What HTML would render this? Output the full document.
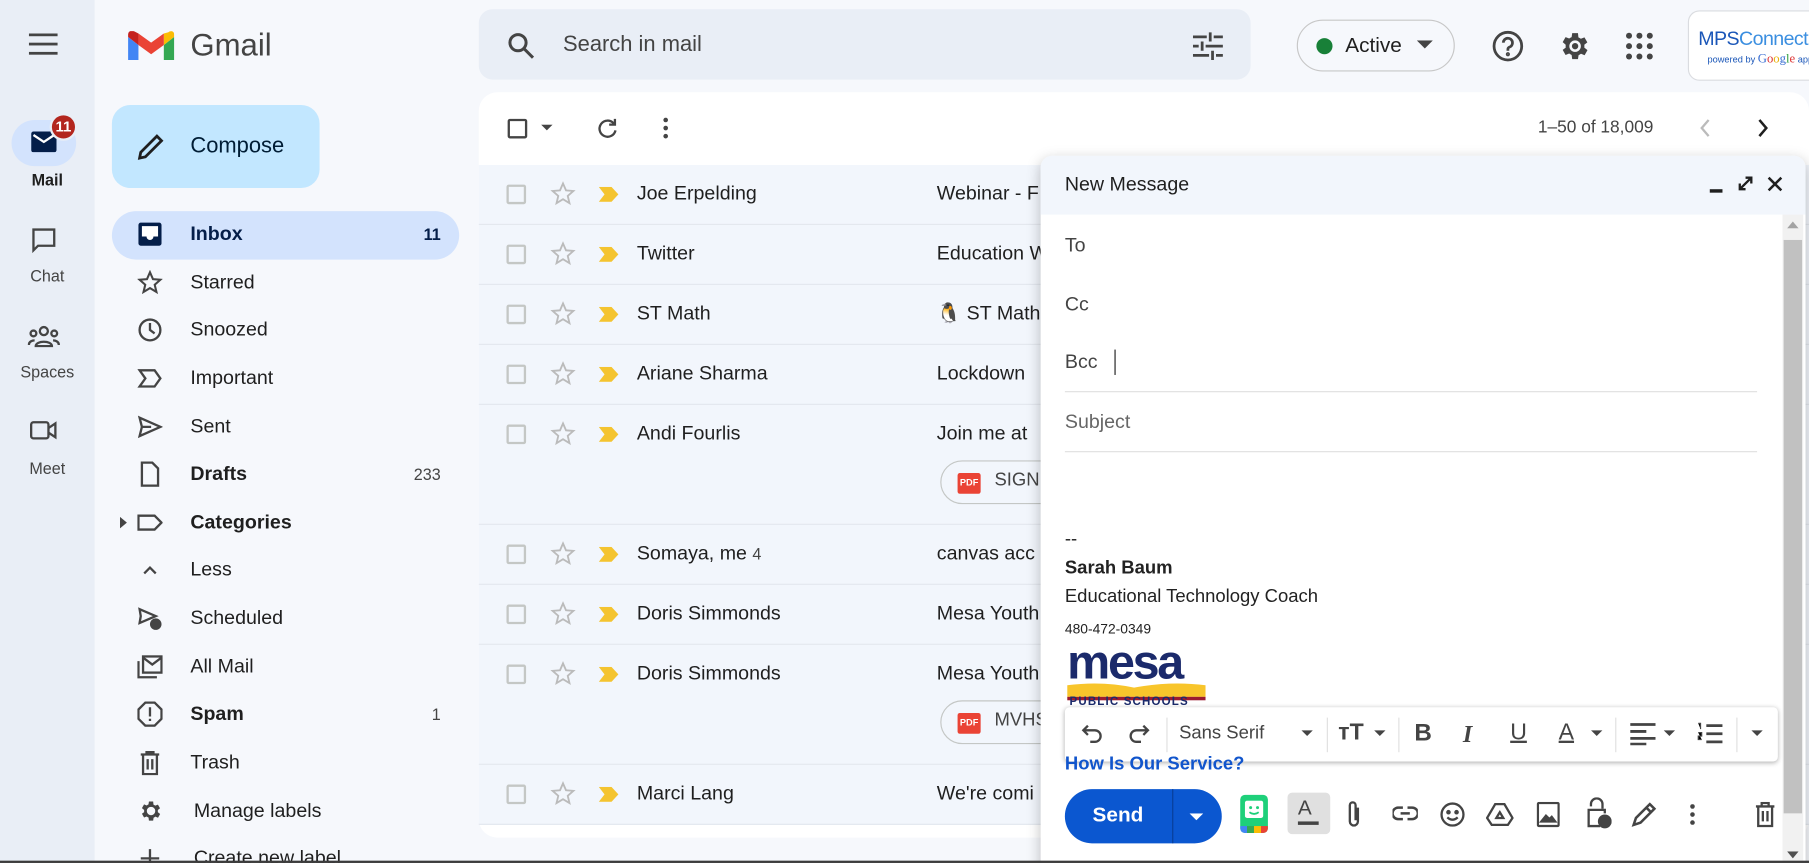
<!DOCTYPE html>
<html><head><meta charset="utf-8">
<style>
*{box-sizing:border-box;margin:0;padding:0}
html,body{width:1809px;height:863px;overflow:hidden;background:#f6f8fc}
#w{position:absolute;left:0;top:0;width:1568px;height:748px;transform:scale(1.15370);transform-origin:0 0;font-family:"Liberation Sans",Arial,sans-serif;color:#1f1f1f;background:#f6f8fc;overflow:hidden}
.a{position:absolute}
.rail{left:0;top:0;width:82px;height:748px;background:#e9eef6}
.rl{position:absolute;width:82px;text-align:center;font-size:14px;color:#444}
.nav{position:absolute;left:165px;font-size:17px;color:#1f1f1f;transform:translateY(-50%)}
.nb{font-weight:bold}
.ni{position:absolute;left:119px;width:22px;height:22px;transform:translateY(-50%)}
.cnt{position:absolute;right:1186px;font-size:14px;color:#444;transform:translateY(-50%)}
.row{position:absolute;left:415px;width:1153px;background:#f2f6fc;border-bottom:1px solid #e3e7ee}
.cb{position:absolute;left:24px;top:17px;width:17px;height:17px;border:2px solid #c4c7c5;border-radius:2px}
.st{position:absolute;left:62px;top:14px}
.imp{position:absolute;left:104px;top:19px}
.snd{position:absolute;left:137px;top:15px;font-size:17px;color:#1f1f1f}
.sub{position:absolute;left:397px;top:15px;font-size:17px;color:#1f1f1f}
.chip{position:absolute;left:400px;top:48px;width:140px;height:38px;border:1px solid #c4c7c5;border-radius:19px;background:#f2f6fc}
.pdf{position:absolute;left:14px;top:10px;width:20px;height:18px;background:#ea4335;border-radius:2px;color:#fff;font-size:8px;font-weight:bold;text-align:center;line-height:18px}
.chip span{position:absolute;left:46px;top:8px;font-size:16px;color:#444}
.fl{position:absolute;left:923px;font-size:17px;color:#444}
.ln{position:absolute;left:923px;width:600px;height:1px;background:#e0e0e0}
.ic{position:absolute}
</style></head><body><div id="w">
<div class="a rail"></div>
<!-- hamburger -->
<svg class="ic" style="left:25px;top:29px" width="25" height="20"><rect y="0" width="25" height="2.4" fill="#444"/><rect y="8" width="25" height="2.4" fill="#444"/><rect y="16" width="25" height="2.4" fill="#444"/></svg>
<!-- mail -->
<div class="a" style="left:10px;top:104px;width:56px;height:40px;border-radius:20px;background:#d3e3fd"></div>
<svg class="ic" style="left:27px;top:114px" width="22" height="18"><rect width="22" height="18" rx="2" fill="#041e49"/><path d="M2 3l9 6 9-6" stroke="#fff" stroke-width="2" fill="none"/></svg>
<div class="a" style="left:43px;top:98px;width:24px;height:24px;border-radius:12px;background:#b3261e;border:2px solid #e9eef6;color:#fff;font-size:13px;font-weight:bold;text-align:center;line-height:20px">11</div>
<div class="rl" style="top:148px;color:#1f1f1f;font-weight:bold;font-size:14px">Mail</div>
<svg class="ic" style="left:26px;top:196px" width="24" height="24" fill="none" stroke="#444" stroke-width="2"><path d="M3 3h18v14H7l-4 4z"/></svg>
<div class="rl" style="top:231px">Chat</div>
<svg class="ic" style="left:24px;top:281px" width="28" height="20" fill="none" stroke="#444" stroke-width="2"><circle cx="14" cy="6" r="3.5"/><circle cx="5" cy="8" r="2.5"/><circle cx="23" cy="8" r="2.5"/><path d="M7 19c0-5 14-5 14 0zM1 18c0-3 3-4 5-4M27 18c0-3-3-4-5-4"/></svg>
<div class="rl" style="top:314px">Spaces</div>
<svg class="ic" style="left:25px;top:363px" width="26" height="20" fill="none" stroke="#444" stroke-width="2"><rect x="2" y="3" width="15" height="14" rx="2"/><path d="M17 8l6-4v12l-6-4"/></svg>
<div class="rl" style="top:398px">Meet</div>

<!-- gmail logo -->
<svg class="ic" style="left:111px;top:27px" width="40" height="27" viewBox="0 0 40 27"><path d="M0 5v20h9V12z" fill="#4285f4"/><path d="M31 12v13h9V5z" fill="#34a853"/><path d="M31 2v10l9-7V3c0-3-3-4-5-2z" fill="#fbbc04"/><path d="M9 12V2l11 8 11-8v10l-11 8z" fill="#ea4335"/><path d="M0 3v2l9 7V2L5 0C3-1 0 0 0 3z" fill="#c5221f"/></svg>
<div class="a" style="left:165px;top:24px;font-size:27px;color:#444">Gmail</div>

<!-- search -->
<div class="a" style="left:415px;top:8px;width:669px;height:61px;border-radius:12px;background:#e9eef6"></div>
<svg class="ic" style="left:440px;top:28px" width="24" height="24" fill="none" stroke="#444" stroke-width="2.6"><circle cx="9" cy="9" r="7"/><path d="M14 14l8 8"/></svg>
<div class="a" style="left:488px;top:28px;font-size:19px;color:#444">Search in mail</div>
<svg class="ic" style="left:1034px;top:28px" width="26" height="24" stroke="#444" stroke-width="2.4"><path d="M0 4h12M18 4h8M0 12h5M11 12h15M0 20h14M20 20h6M15 0v8M8 8v8M17 16v8"/></svg>
<!-- active -->
<div class="a" style="left:1124px;top:17px;width:137px;height:45px;border:1px solid #c7c7c7;border-radius:23px"></div>
<div class="a" style="left:1141px;top:33px;width:14px;height:14px;border-radius:7px;background:#188038"></div>
<div class="a" style="left:1166px;top:29px;font-size:18px;color:#1f1f1f">Active</div>
<svg class="ic" style="left:1228px;top:35px" width="14" height="8"><path d="M0 0h14L7 7z" fill="#444"/></svg>
<svg class="ic" style="left:1293px;top:26px" width="28" height="28" fill="none" stroke="#444" stroke-width="2.4"><circle cx="14" cy="14" r="12"/><path d="M10 11a4 4 0 1 1 5 4c-1 .5-1 1-1 3"/><circle cx="14" cy="21" r=".6" fill="#444"/></svg>
<svg class="ic" style="left:1349px;top:25px" width="30" height="30" viewBox="0 0 24 24"><path fill="#444" d="M19.4 13a7.5 7.5 0 0 0 0-2l2.1-1.6-2-3.5-2.5 1a7 7 0 0 0-1.7-1L15 3h-4l-.4 2.7a7 7 0 0 0-1.7 1l-2.5-1-2 3.5L6.5 11a7.5 7.5 0 0 0 0 2l-2.1 1.6 2 3.5 2.5-1a7 7 0 0 0 1.7 1L11 21h4l.4-2.7a7 7 0 0 0 1.7-1l2.5 1 2-3.5zM13 16a4 4 0 1 1 0-8 4 4 0 0 1 0 8z"/><circle cx="13" cy="12" r="2.2" fill="#444"/></svg>
<svg class="ic" style="left:1409px;top:28px" width="24" height="24" fill="#444"><circle cx="3" cy="3" r="2.6"/><circle cx="12" cy="3" r="2.6"/><circle cx="21" cy="3" r="2.6"/><circle cx="3" cy="12" r="2.6"/><circle cx="12" cy="12" r="2.6"/><circle cx="21" cy="12" r="2.6"/><circle cx="3" cy="21" r="2.6"/><circle cx="12" cy="21" r="2.6"/><circle cx="21" cy="21" r="2.6"/></svg>
<div class="a" style="left:1463px;top:9px;width:120px;height:61px;border:1px solid #dadce0;border-radius:10px;background:#fff;overflow:hidden">
<div style="position:absolute;left:8px;top:14px;font-size:17px;color:#1a56b8;letter-spacing:-0.5px;white-space:nowrap">MPS<span style="color:#3a8ee0">Connect</span></div>
<div style="position:absolute;left:16px;top:35px;font-size:8px;color:#1a56b8;white-space:nowrap">powered by <span style="font-family:'Liberation Serif',serif;font-size:11px"><span style="color:#3b6fd3">G</span><span style="color:#d33">o</span><span style="color:#e9b10d">o</span><span style="color:#3b6fd3">g</span><span style="color:#2a9d3a">l</span><span style="color:#d33">e</span></span> apps</div>
</div>

<!-- compose -->
<div class="a" style="left:97px;top:91px;width:180px;height:72px;border-radius:16px;background:#c2e7ff"></div>
<svg class="ic" style="left:118px;top:114px" width="26" height="26" fill="none" stroke="#1f1f1f" stroke-width="2.4"><path d="M3 23l1-5L18 4l4 4L8 22z"/></svg>
<div class="a" style="left:165px;top:116px;font-size:19px;color:#001d35">Compose</div>

<!-- nav -->
<div class="a" style="left:97px;top:183px;width:301px;height:42px;border-radius:21px;background:#d3e3fd"></div>
<svg class="ni" style="top:203px" viewBox="0 0 22 22"><rect x="1" y="1" width="20" height="20" rx="2" fill="#041e49"/><path d="M4 4h14v9h-4a3 3 0 0 1-6 0H4z" fill="#fff"/></svg>
<div class="nav nb" style="top:203px;color:#041e49">Inbox</div><div class="cnt" style="top:203px;font-weight:bold;color:#041e49">11</div>
<svg class="ni" style="top:245px" viewBox="0 0 22 22"><path d="M11 2l2.6 6 6.4.5-4.9 4.3 1.5 6.3L11 15.7 5.4 19.1l1.5-6.3L2 8.5 8.4 8z" fill="none" stroke="#444" stroke-width="1.8"/></svg>
<div class="nav" style="top:245px">Starred</div>
<svg class="ni" style="top:286px" viewBox="0 0 22 22" fill="none" stroke="#444" stroke-width="2"><circle cx="11" cy="11" r="9"/><path d="M11 5v6l4 3"/></svg>
<div class="nav" style="top:286px">Snoozed</div>
<svg class="ni" style="top:328px" viewBox="0 0 22 22" fill="none" stroke="#444" stroke-width="2"><path d="M2 4h13l5 7-5 7H2l5-7z"/></svg>
<div class="nav" style="top:328px">Important</div>
<svg class="ni" style="top:370px" viewBox="0 0 22 22" fill="none" stroke="#444" stroke-width="2"><path d="M2 3l18 8-18 8 2-8zM4 11h8"/></svg>
<div class="nav" style="top:370px">Sent</div>
<svg class="ni" style="top:411px" viewBox="0 0 22 22" fill="none" stroke="#444" stroke-width="2"><path d="M4 1h9l5 5v15H4z"/></svg>
<div class="nav nb" style="top:411px">Drafts</div><div class="cnt" style="top:411px">233</div>
<svg class="ic" style="left:104px;top:448px" width="6" height="10"><path d="M0 0l6 5-6 5z" fill="#444"/></svg>
<svg class="ni" style="top:453px" viewBox="0 0 22 22" fill="none" stroke="#444" stroke-width="2"><path d="M1 5h14l6 6-6 6H1z"/></svg>
<div class="nav nb" style="top:453px">Categories</div>
<svg class="ni" style="top:494px" viewBox="0 0 22 22" fill="none" stroke="#444" stroke-width="2"><path d="M6 14l5-5 5 5"/></svg>
<div class="nav" style="top:494px">Less</div>
<svg class="ni" style="top:536px" viewBox="0 0 22 22"><path d="M2 3l14 6-14 6 1-6z" fill="none" stroke="#444" stroke-width="2"/><circle cx="16" cy="16" r="5" fill="#444"/></svg>
<div class="nav" style="top:536px">Scheduled</div>
<svg class="ni" style="top:578px" viewBox="0 0 22 22" fill="none" stroke="#444" stroke-width="2"><rect x="5" y="2" width="16" height="14"/><path d="M5 3l8 6 8-6M1 6v14h16"/></svg>
<div class="nav" style="top:578px">All Mail</div>
<svg class="ni" style="top:619px" viewBox="0 0 22 22" fill="none" stroke="#444" stroke-width="2"><path d="M7 1h8l6 6v8l-6 6H7l-6-6V7z"/><path d="M11 5v8M11 15v2"/></svg>
<div class="nav nb" style="top:619px">Spam</div><div class="cnt" style="top:619px">1</div>
<svg class="ni" style="top:661px" viewBox="0 0 22 22" fill="none" stroke="#444" stroke-width="2"><path d="M3 4h16M8 4V2h6v2M5 4v17h12V4M9 8v9M13 8v9"/></svg>
<div class="nav" style="top:661px">Trash</div>
<svg class="ni" style="top:703px" viewBox="0 0 24 24"><path fill="#444" d="M19.4 13a7.5 7.5 0 0 0 0-2l2.1-1.6-2-3.5-2.5 1a7 7 0 0 0-1.7-1L15 3h-4l-.4 2.7a7 7 0 0 0-1.7 1l-2.5-1-2 3.5L6.5 11a7.5 7.5 0 0 0 0 2l-2.1 1.6 2 3.5 2.5-1a7 7 0 0 0 1.7 1L11 21h4l.4-2.7a7 7 0 0 0 1.7-1l2.5 1 2-3.5zM13 16a4 4 0 1 1 0-8 4 4 0 0 1 0 8z"/></svg>
<div class="nav" style="top:703px;left:168px">Manage labels</div>
<svg class="ni" style="top:744px" viewBox="0 0 22 22" stroke="#444" stroke-width="2"><path d="M11 3v16M3 11h16"/></svg>
<div class="nav" style="top:744px;left:168px">Create new label</div>

<!-- list panel -->
<div class="a" style="left:415px;top:80px;width:1153px;height:646px;background:#fff;border-radius:16px"></div>
<div class="a" style="left:440px;top:103px;width:17px;height:17px;border:2px solid #444;border-radius:2px"></div>
<svg class="ic" style="left:469px;top:108px" width="10" height="6"><path d="M0 0h10L5 5z" fill="#444"/></svg>
<svg class="ic" style="left:516px;top:101px" width="20" height="20" fill="none" stroke="#444" stroke-width="2"><path d="M16 6a7 7 0 1 0 1.5 6"/><path d="M17 2v5h-5" /></svg>
<svg class="ic" style="left:574px;top:102px" width="6" height="18" fill="#444"><circle cx="3" cy="2" r="2"/><circle cx="3" cy="9" r="2"/><circle cx="3" cy="16" r="2"/></svg>
<div class="a" style="left:1333px;top:102px;font-size:15px;color:#444">1–50 of 18,009</div>
<svg class="ic" style="left:1473px;top:103px" width="10" height="16" fill="none" stroke="#bbb" stroke-width="2"><path d="M8 1L2 8l6 7"/></svg>
<svg class="ic" style="left:1523px;top:103px" width="10" height="16" fill="none" stroke="#1f1f1f" stroke-width="2.2"><path d="M2 1l6 7-6 7"/></svg>

<div id="rows"></div>
<div class="row" style="top:143px;height:52px"><div class="cb"></div><svg class="st" width="22" height="22"><path d="M11 2l2.6 6 6.4.5-4.9 4.3 1.5 6.3L11 15.7 5.4 19.1l1.5-6.3L2 8.5 8.4 8z" fill="none" stroke="#bbb" stroke-width="1.6"/></svg><svg class="imp" width="18" height="13"><path d="M0 0h11l6 6.5-6 6.5H0l5-6.5z" fill="#f4c430"/></svg><div class="snd">Joe Erpelding</div><div class="sub">Webinar - F</div></div>
<div class="row" style="top:195px;height:52px"><div class="cb"></div><svg class="st" width="22" height="22"><path d="M11 2l2.6 6 6.4.5-4.9 4.3 1.5 6.3L11 15.7 5.4 19.1l1.5-6.3L2 8.5 8.4 8z" fill="none" stroke="#bbb" stroke-width="1.6"/></svg><svg class="imp" width="18" height="13"><path d="M0 0h11l6 6.5-6 6.5H0l5-6.5z" fill="#f4c430"/></svg><div class="snd">Twitter</div><div class="sub">Education W</div></div>
<div class="row" style="top:247px;height:52px"><div class="cb"></div><svg class="st" width="22" height="22"><path d="M11 2l2.6 6 6.4.5-4.9 4.3 1.5 6.3L11 15.7 5.4 19.1l1.5-6.3L2 8.5 8.4 8z" fill="none" stroke="#bbb" stroke-width="1.6"/></svg><svg class="imp" width="18" height="13"><path d="M0 0h11l6 6.5-6 6.5H0l5-6.5z" fill="#f4c430"/></svg><div class="snd">ST Math</div><div class="sub">🐧 ST Math</div></div>
<div class="row" style="top:299px;height:52px"><div class="cb"></div><svg class="st" width="22" height="22"><path d="M11 2l2.6 6 6.4.5-4.9 4.3 1.5 6.3L11 15.7 5.4 19.1l1.5-6.3L2 8.5 8.4 8z" fill="none" stroke="#bbb" stroke-width="1.6"/></svg><svg class="imp" width="18" height="13"><path d="M0 0h11l6 6.5-6 6.5H0l5-6.5z" fill="#f4c430"/></svg><div class="snd">Ariane Sharma</div><div class="sub">Lockdown</div></div>
<div class="row" style="top:351px;height:104px"><div class="cb"></div><svg class="st" width="22" height="22"><path d="M11 2l2.6 6 6.4.5-4.9 4.3 1.5 6.3L11 15.7 5.4 19.1l1.5-6.3L2 8.5 8.4 8z" fill="none" stroke="#bbb" stroke-width="1.6"/></svg><svg class="imp" width="18" height="13"><path d="M0 0h11l6 6.5-6 6.5H0l5-6.5z" fill="#f4c430"/></svg><div class="snd">Andi Fourlis</div><div class="sub">Join me at</div><div class="chip"><div class="pdf">PDF</div><span>SIGN</span></div></div>
<div class="row" style="top:455px;height:52px"><div class="cb"></div><svg class="st" width="22" height="22"><path d="M11 2l2.6 6 6.4.5-4.9 4.3 1.5 6.3L11 15.7 5.4 19.1l1.5-6.3L2 8.5 8.4 8z" fill="none" stroke="#bbb" stroke-width="1.6"/></svg><svg class="imp" width="18" height="13"><path d="M0 0h11l6 6.5-6 6.5H0l5-6.5z" fill="#f4c430"/></svg><div class="snd">Somaya, me <span style="font-size:14px;color:#444">4</span></div><div class="sub">canvas acc</div></div>
<div class="row" style="top:507px;height:52px"><div class="cb"></div><svg class="st" width="22" height="22"><path d="M11 2l2.6 6 6.4.5-4.9 4.3 1.5 6.3L11 15.7 5.4 19.1l1.5-6.3L2 8.5 8.4 8z" fill="none" stroke="#bbb" stroke-width="1.6"/></svg><svg class="imp" width="18" height="13"><path d="M0 0h11l6 6.5-6 6.5H0l5-6.5z" fill="#f4c430"/></svg><div class="snd">Doris Simmonds</div><div class="sub">Mesa Youth</div></div>
<div class="row" style="top:559px;height:104px"><div class="cb"></div><svg class="st" width="22" height="22"><path d="M11 2l2.6 6 6.4.5-4.9 4.3 1.5 6.3L11 15.7 5.4 19.1l1.5-6.3L2 8.5 8.4 8z" fill="none" stroke="#bbb" stroke-width="1.6"/></svg><svg class="imp" width="18" height="13"><path d="M0 0h11l6 6.5-6 6.5H0l5-6.5z" fill="#f4c430"/></svg><div class="snd">Doris Simmonds</div><div class="sub">Mesa Youth</div><div class="chip"><div class="pdf">PDF</div><span>MVHS</span></div></div>
<div class="row" style="top:663px;height:52px"><div class="cb"></div><svg class="st" width="22" height="22"><path d="M11 2l2.6 6 6.4.5-4.9 4.3 1.5 6.3L11 15.7 5.4 19.1l1.5-6.3L2 8.5 8.4 8z" fill="none" stroke="#bbb" stroke-width="1.6"/></svg><svg class="imp" width="18" height="13"><path d="M0 0h11l6 6.5-6 6.5H0l5-6.5z" fill="#f4c430"/></svg><div class="snd">Marci Lang</div><div class="sub">We're comi</div></div>

<!-- compose window -->
<div class="a" style="left:902px;top:135px;width:663px;height:620px;background:#fff;border-radius:10px 10px 0 0;box-shadow:0 4px 12px rgba(0,0,0,.25)"></div>
<div class="a" style="left:902px;top:135px;width:663px;height:51px;background:#f2f6fc;border-radius:10px 10px 0 0"></div>
<div class="a" style="left:923px;top:150px;font-size:17px;color:#1f1f1f">New Message</div>
<div class="a" style="left:1482px;top:164px;width:11px;height:2.5px;background:#1f1f1f"></div>
<svg class="ic" style="left:1506px;top:152px" width="14" height="14" fill="none" stroke="#1f1f1f" stroke-width="2"><path d="M2 12l10-10M7 2h5v5M2 7v5h5"/></svg>
<svg class="ic" style="left:1532px;top:153px" width="13" height="13" stroke="#1f1f1f" stroke-width="2.2"><path d="M1 1l11 11M12 1L1 12"/></svg>
<!-- scrollbar -->
<div class="a" style="left:1545px;top:186px;width:18px;height:562px;background:#f1f1f1"></div>
<svg class="ic" style="left:1549px;top:192px" width="10" height="6"><path d="M0 6h10L5 0z" fill="#a3a3a3"/></svg>
<div class="a" style="left:1546px;top:208px;width:16px;height:497px;background:#c1c1c1"></div>
<svg class="ic" style="left:1549px;top:738px" width="10" height="6"><path d="M0 0h10L5 6z" fill="#505050"/></svg>

<div class="fl" style="top:203px">To</div>
<div class="fl" style="top:254px">Cc</div>
<div class="fl" style="top:304px">Bcc</div>
<div class="a" style="left:966px;top:303px;width:1px;height:22px;background:#1f1f1f"></div>
<div class="ln" style="top:339px"></div>
<div class="fl" style="top:356px;color:#666">Subject</div>
<div class="ln" style="top:391px"></div>
<div class="a" style="left:923px;top:459px;font-size:16px;color:#222">--</div>
<div class="a" style="left:923px;top:484px;font-size:16px;font-weight:bold;color:#222">Sarah Baum</div>
<div class="a" style="left:923px;top:509px;font-size:16px;color:#222">Educational Technology Coach</div>
<div class="a" style="left:923px;top:538px;font-size:12px;color:#222">480-472-0349</div>
<!-- mesa logo -->
<div class="a" style="left:925px;top:553px;font-size:42px;font-weight:bold;color:#1b2a6b;letter-spacing:-2px;transform:scaleY(1);line-height:42px">mesa</div>
<svg class="ic" style="left:925px;top:590px" width="120" height="24"><path d="M0 4q30-4 58 2q32-6 62-2v10H0z" fill="#f8c52b"/><rect x="0" y="14" width="120" height="3" fill="#9b1b30"/></svg>
<div class="a" style="left:927px;top:603px;font-size:10px;font-weight:bold;color:#1b2a6b;letter-spacing:1px">PUBLIC SCHOOLS</div>
<!-- format toolbar -->
<div class="a" style="left:923px;top:613px;width:618px;height:47px;background:#fff;border-radius:4px;box-shadow:0 1px 4px rgba(0,0,0,.3)"></div>
<svg class="ic" style="left:937px;top:627px" width="20" height="18" fill="none" stroke="#444" stroke-width="2"><path d="M6 2L2 6l4 4M2 6h10a5 5 0 0 1 0 10H8"/></svg>
<svg class="ic" style="left:977px;top:627px" width="20" height="18" fill="none" stroke="#444" stroke-width="2"><path d="M14 2l4 4-4 4M18 6H8a5 5 0 0 0 0 10h4"/></svg>
<div class="a" style="left:1011px;top:622px;width:1px;height:30px;background:#e0e0e0"></div>
<div class="a" style="left:1022px;top:627px;font-size:16px;color:#444">Sans Serif</div>
<svg class="ic" style="left:1128px;top:633px" width="10" height="6"><path d="M0 0h10L5 5z" fill="#444"/></svg>
<div class="a" style="left:1150px;top:622px;width:1px;height:30px;background:#e0e0e0"></div>
<div class="a" style="left:1160px;top:624px;font-size:20px;font-weight:bold;color:#444">тT</div>
<svg class="ic" style="left:1191px;top:633px" width="10" height="6"><path d="M0 0h10L5 5z" fill="#444"/></svg>
<div class="a" style="left:1212px;top:622px;width:1px;height:30px;background:#e0e0e0"></div>
<div class="a" style="left:1226px;top:624px;font-size:21px;font-weight:bold;color:#444">B</div>
<div class="a" style="left:1268px;top:624px;font-size:21px;font-style:italic;font-weight:bold;color:#444;font-family:'Liberation Serif',serif">I</div>
<div class="a" style="left:1309px;top:624px;font-size:20px;color:#444;text-decoration:underline">U</div>
<div class="a" style="left:1351px;top:624px;font-size:20px;color:#444;text-decoration:underline">A</div>
<svg class="ic" style="left:1379px;top:633px" width="10" height="6"><path d="M0 0h10L5 5z" fill="#444"/></svg>
<div class="a" style="left:1400px;top:622px;width:1px;height:30px;background:#e0e0e0"></div>
<svg class="ic" style="left:1413px;top:626px" width="22" height="20" stroke="#444" stroke-width="2.4"><path d="M0 2h22M0 8h14M0 14h22M0 19h14"/></svg>
<svg class="ic" style="left:1442px;top:633px" width="10" height="6"><path d="M0 0h10L5 5z" fill="#444"/></svg>
<svg class="ic" style="left:1471px;top:626px" width="22" height="20" stroke="#444" stroke-width="2.4"><path d="M8 3h14M8 10h14M8 17h14"/><path d="M1 1h2v5M1 9h3v3H1v3h3" stroke-width="1"/></svg>
<div class="a" style="left:1505px;top:622px;width:1px;height:30px;background:#e0e0e0"></div>
<svg class="ic" style="left:1518px;top:633px" width="10" height="6"><path d="M0 0h10L5 5z" fill="#444"/></svg>

<div class="a" style="left:923px;top:654px;font-size:16px;font-weight:bold;color:#1155cc">How Is Our Service?</div>
<!-- send -->
<div class="a" style="left:923px;top:684px;width:136px;height:47px;border-radius:24px;background:#0b57d0"></div>
<div class="a" style="left:1016px;top:684px;width:1px;height:47px;background:#083e98"></div>
<div class="a" style="left:947px;top:696px;font-size:18px;font-weight:bold;color:#fff">Send</div>
<svg class="ic" style="left:1031px;top:705px" width="12" height="7"><path d="M0 0h12L6 6z" fill="#fff"/></svg>
<div class="a" style="left:1075px;top:689px;width:24px;height:33px;border-radius:4px;background:#1ed07a;overflow:hidden"><div style="position:absolute;left:0;bottom:0;width:24px;height:6px;background:linear-gradient(90deg,#4285f4 25%,#34a853 25%,#34a853 50%,#fbbc04 50%,#fbbc04 75%,#ea4335 75%)"></div><svg style="position:absolute;left:4px;top:5px" width="16" height="18"><rect width="16" height="15" rx="2" fill="#fff"/><circle cx="5" cy="6" r="1.3" fill="#1ed07a"/><circle cx="11" cy="6" r="1.3" fill="#1ed07a"/><path d="M4 10q4 3 8 0" stroke="#1ed07a" stroke-width="1.5" fill="none"/></svg></div>
<div class="a" style="left:1116px;top:687px;width:37px;height:36px;border-radius:4px;background:#e0e0e0"></div>
<div class="a" style="left:1125px;top:690px;font-size:18px;color:#444">A</div>
<div class="a" style="left:1125px;top:712px;width:18px;height:3px;background:#444"></div>
<svg class="ic" style="left:1167px;top:694px" width="14" height="24" fill="none" stroke="#444" stroke-width="2"><path d="M10 6v12a3.5 3.5 0 0 1-7 0V4a2.5 2.5 0 0 1 5 0v13"/></svg>
<svg class="ic" style="left:1207px;top:698px" width="22" height="14" fill="none" stroke="#444" stroke-width="2.2"><path d="M9 2H5a5 5 0 0 0 0 10h4M13 2h4a5 5 0 0 1 0 10h-4M7 7h8"/></svg>
<svg class="ic" style="left:1248px;top:695px" width="22" height="22" fill="none" stroke="#444" stroke-width="2"><circle cx="11" cy="11" r="9.5"/><circle cx="7.5" cy="9" r="1" fill="#444"/><circle cx="14.5" cy="9" r="1" fill="#444"/><path d="M6.5 13.5q4.5 4 9 0"/></svg>
<svg class="ic" style="left:1288px;top:695px" width="24" height="22" fill="none" stroke="#444" stroke-width="2"><path d="M8 2h8l7 12-4 6H5l-4-6z"/><path d="M9 14l3-5 3 5z"/></svg>
<svg class="ic" style="left:1332px;top:695px" width="20" height="22" fill="none" stroke="#444" stroke-width="2"><rect x="1" y="1" width="18" height="20" rx="1"/><path d="M4 17l4-5 3 3 2-2 3 4z" fill="#444"/></svg>
<svg class="ic" style="left:1375px;top:691px" width="22" height="28" fill="none" stroke="#444" stroke-width="2"><path d="M4 8V6a5 5 0 0 1 10 0v4"/><path d="M12 25H2V11h14v3"/><circle cx="16" cy="21" r="5" fill="#444"/></svg>
<svg class="ic" style="left:1414px;top:695px" width="22" height="22" fill="none" stroke="#444" stroke-width="2.2"><path d="M2 20l2-6L16 2l4 4L8 18zM13 5l4 4"/></svg>
<svg class="ic" style="left:1464px;top:697px" width="6" height="18" fill="#444"><circle cx="3" cy="2" r="2"/><circle cx="3" cy="9" r="2"/><circle cx="3" cy="16" r="2"/></svg>
<svg class="ic" style="left:1521px;top:695px" width="18" height="22" fill="none" stroke="#444" stroke-width="2"><path d="M1 4h16M6 4V1h6v3M3 4v17h12V4M7 8v9M11 8v9"/></svg>
<div class="a" style="left:0;top:746px;width:1568px;height:2px;background:#3c3c3c"></div>
</div></body></html>
